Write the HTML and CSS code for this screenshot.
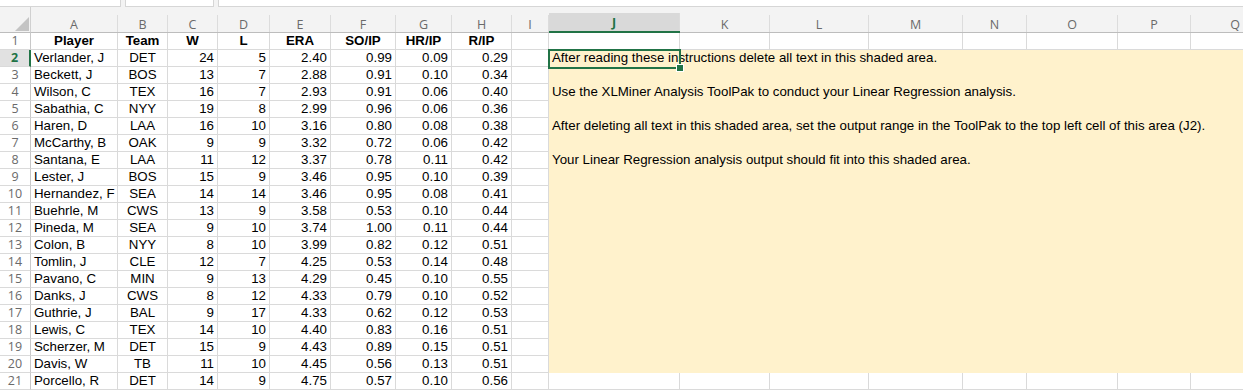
FILE: index.html
```html
<!DOCTYPE html>
<html lang="en">
<head>
    <meta charset="UTF-8">
    <meta name="viewport" content="width=device-width, initial-scale=1.0">
    <title>Pitching Stats - Linear Regression</title>
    <link rel="stylesheet" href="styles.css">
</head>
<body>
    <div class="namebar">
        <div class="box box-name"></div>
        <div class="box box-fx"></div>
        <div class="box box-formula"></div>
    </div>

    <div class="sheet" id="sheet">
        <div class="corner">
            <svg width="31" height="26" viewBox="0 0 31 26"><polygon points="29,10 29,24 15,24" fill="#c4c4c4"/></svg>
        </div>

        <div class="shaded">
            <div class="note">After reading these instructions delete all text in this shaded area.</div>
            <div class="note"></div>
            <div class="note">Use the XLMiner Analysis ToolPak to conduct your Linear Regression analysis.</div>
            <div class="note"></div>
            <div class="note">After deleting all text in this shaded area, set the output range in the ToolPak to the top left cell of this area (J2).</div>
            <div class="note"></div>
            <div class="note">Your Linear Regression analysis output should fit into this shaded area.</div>
        </div>

        <div class="selection"><span class="handle"></span></div>
    </div>

    <script>
        /* Sheet data */
        const columns = ["A", "B", "C", "D", "E", "F", "G", "H", "I", "J", "K", "L", "M", "N", "O", "P", "Q"];
        const header = ["Player", "Team", "W", "L", "ERA", "SO/IP", "HR/IP", "R/IP"];
        const rows = [
            ["Verlander, J", "DET", "24", "5", "2.40", "0.99", "0.09", "0.29"],
            ["Beckett, J", "BOS", "13", "7", "2.88", "0.91", "0.10", "0.34"],
            ["Wilson, C", "TEX", "16", "7", "2.93", "0.91", "0.06", "0.40"],
            ["Sabathia, C", "NYY", "19", "8", "2.99", "0.96", "0.06", "0.36"],
            ["Haren, D", "LAA", "16", "10", "3.16", "0.80", "0.08", "0.38"],
            ["McCarthy, B", "OAK", "9", "9", "3.32", "0.72", "0.06", "0.42"],
            ["Santana, E", "LAA", "11", "12", "3.37", "0.78", "0.11", "0.42"],
            ["Lester, J", "BOS", "15", "9", "3.46", "0.95", "0.10", "0.39"],
            ["Hernandez, F", "SEA", "14", "14", "3.46", "0.95", "0.08", "0.41"],
            ["Buehrle, M", "CWS", "13", "9", "3.58", "0.53", "0.10", "0.44"],
            ["Pineda, M", "SEA", "9", "10", "3.74", "1.00", "0.11", "0.44"],
            ["Colon, B", "NYY", "8", "10", "3.99", "0.82", "0.12", "0.51"],
            ["Tomlin, J", "CLE", "12", "7", "4.25", "0.53", "0.14", "0.48"],
            ["Pavano, C", "MIN", "9", "13", "4.29", "0.45", "0.10", "0.55"],
            ["Danks, J", "CWS", "8", "12", "4.33", "0.79", "0.10", "0.52"],
            ["Guthrie, J", "BAL", "9", "17", "4.33", "0.62", "0.12", "0.53"],
            ["Lewis, C", "TEX", "14", "10", "4.40", "0.83", "0.16", "0.51"],
            ["Scherzer, M", "DET", "15", "9", "4.43", "0.89", "0.15", "0.51"],
            ["Davis, W", "TB", "11", "10", "4.45", "0.56", "0.13", "0.51"],
            ["Porcello, R", "DET", "14", "9", "4.75", "0.57", "0.10", "0.56"]
        ];

        const sheet = document.getElementById("sheet");

        function addCell(className, text) {
            const cell = document.createElement("div");
            cell.className = className;
            cell.textContent = text || "";
            sheet.appendChild(cell);
            return cell;
        }

        /* Column letters */
        columns.forEach(letter => {
            const head = addCell(letter === "J" ? "colhead active" : "colhead");
            const label = document.createElement("span");
            label.textContent = letter;
            head.appendChild(label);
        });

        /* Rows 1..21 (J2:Q20 is covered by the shaded block) */
        for (let r = 1; r <= 21; r++) {
            addCell(r === 2 ? "rowhead active" : "rowhead", r);
            const values = r === 1 ? header : rows[r - 2];
            columns.forEach((letter, c) => {
                if (r >= 2 && r <= 20 && c >= 9) return;
                let cls = "cell";
                if (r === 1) cls += " bold";
                else if (c === 1) cls += " center";
                else if (c >= 2 && c <= 7) cls += " num";
                addCell(cls, c < 8 ? values[c] : "");
            });
        }
    </script>
</body>
</html>
```

FILE: styles.css
```css
body {
    margin: 0;
    font-family: "Liberation Sans", Arial, sans-serif;
    font-size: 13.3px;
    color: #000;
    background: #fff;
    overflow: hidden;
}

.namebar {
    height: 7px;
    display: flex;
    align-items: flex-end;
    gap: 4px;
    background: #f3f3f3;
    overflow: hidden;
}
.box {
    flex: none;
    height: 24px;
    box-sizing: border-box;
    background: #fff;
    border: 1px solid #d6d6d6;
}
.box-name {
    width: 122px;
    margin-left: -1px;
}
.box-fx {
    width: 89px;
}
.box-formula {
    flex: 1;
    margin-right: -2px;
}

.sheet {
    position: relative;
    display: grid;
    grid-template-columns: 31px 87px 50px 50px 52px 61px 65px 56px 60px 37px 131px 90px 99px 94px 64px 91px 73px 89px;
    grid-template-rows: 26px repeat(21, 17px);
}

.corner {
    background: #f3f3f3;
    border-bottom: 1px solid #bdbdbd;
    border-right: 1px solid #d0d0d0;
    box-sizing: border-box;
}
.corner svg {
    display: block;
}

.colhead {
    display: flex;
    align-items: flex-end;
    background: #f3f3f3;
    border-bottom: 1px solid #bdbdbd;
    box-sizing: border-box;
}
.colhead span {
    flex: 1;
    height: 17px;
    line-height: 19px;
    text-align: center;
    font-family: "Open Sans", "Noto Sans", sans-serif;
    font-size: 12.5px;
    color: #6a6a6a;
    border-right: 1px solid #dcdcdc;
}
.colhead.active {
    border-bottom: 2px solid #217346;
}
.colhead.active span {
    height: 18px;
    background: #d9d9d9;
    color: #217346;
    font-weight: bold;
}

.rowhead {
    box-sizing: border-box;
    border-right: 1px solid #c8c8c8;
    border-bottom: 1px solid #dadada;
    text-align: center;
    line-height: 16px;
    font-family: "Open Sans", "Noto Sans", sans-serif;
    font-size: 12.5px;
    color: #6a6a6a;
}
.rowhead.active {
    background: #e1e1e1;
    border-right: 2px solid #217346;
    color: #217346;
    font-weight: bold;
}

.cell {
    box-sizing: border-box;
    border-right: 1px solid #dadada;
    border-bottom: 1px solid #dadada;
    padding: 0 3px;
    line-height: 16px;
    white-space: nowrap;
    overflow: hidden;
}
.cell.bold {
    font-weight: bold;
    text-align: center;
}
.cell.center {
    text-align: center;
}
.cell.num {
    text-align: right;
}

.shaded {
    grid-column: 11 / 19;
    grid-row: 3 / 22;
    background: #fff2cc;
}
.note {
    height: 17px;
    line-height: 16px;
    padding-left: 3px;
    white-space: nowrap;
}

.selection {
    position: absolute;
    left: 548px;
    top: 42px;
    width: 133px;
    height: 20px;
    box-sizing: border-box;
    border: 2px solid #217346;
    pointer-events: none;
}
.handle {
    position: absolute;
    right: -5px;
    bottom: -5px;
    width: 6px;
    height: 6px;
    background: #217346;
    border: 1px solid #fff;
}
```
